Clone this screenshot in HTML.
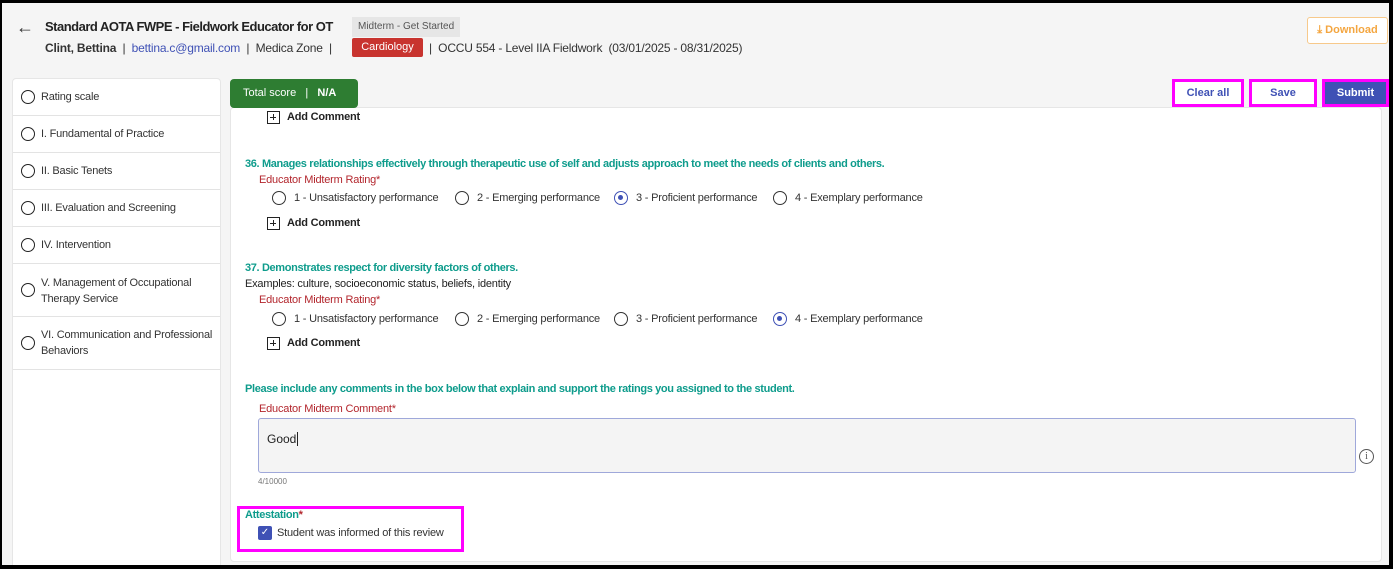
<!DOCTYPE html>
<html><head><meta charset="utf-8"><style>
*{box-sizing:border-box;margin:0;padding:0}
body{width:1393px;height:569px;overflow:hidden;background:#000;font-family:"Liberation Sans",sans-serif;position:relative}
.page{position:absolute;left:2px;top:3px;width:1387px;height:562px;background:#f5f5f5;overflow:hidden}
.a{position:absolute;white-space:nowrap}
.side{position:absolute;left:10px;top:75px;width:209px;height:500px;background:#fff;border:1px solid #e6e6e6;border-radius:4px}
.si{position:absolute;left:0;width:207px;border-bottom:1px solid #e3e3e3;font-size:11px;color:#333;letter-spacing:-0.2px}
.circ{position:absolute;width:14px;height:14px;border:1.6px solid #222;border-radius:50%}
.main{position:absolute;left:228px;top:104px;width:1152px;height:455px;background:#fff;border:1px solid #e6e6e6;border-radius:4px}
.q{color:#0e9c8c;font-size:11px;font-weight:bold;letter-spacing:-0.35px}
.lab{color:#b3262d;font-size:11px;letter-spacing:-0.2px}
.opt{font-size:11px;color:#333;letter-spacing:-0.2px}
.r{position:absolute;width:14px;height:14px;border:1.5px solid #333;border-radius:50%;background:#fff}
.r.on{border-color:#3f51b5}
.r.on:after{content:"";position:absolute;left:3px;top:3px;width:5px;height:5px;border-radius:50%;background:#3f51b5}
.ac{font-size:11px;font-weight:bold;color:#222;letter-spacing:-0.2px}
.pb{position:absolute;width:13px;height:13px;border:1.5px solid #222}
.pb:before{content:"";position:absolute;left:2px;top:4.5px;width:6px;height:1.5px;background:#222}
.pb:after{content:"";position:absolute;left:4.5px;top:2px;width:1.5px;height:6px;background:#222}
.btn{position:absolute;height:28px;border:3px solid #ff00ff;font-size:11px;font-weight:bold;color:#3f51b5;background:#fff;text-align:center;line-height:22px}
</style></head><body>
<div class="page">
 <div class="a" style="left:14px;top:14px;font-size:18px;color:#333">←</div>
 <div class="a" style="left:43px;top:16px;font-size:13px;font-weight:bold;color:#222;letter-spacing:-0.5px">Standard AOTA FWPE - Fieldwork Educator for OT</div>
 <div class="a" style="left:350px;top:14px;height:20px;background:#e6e6e6;padding:0 6px;font-size:10px;color:#555;line-height:20px">Midterm - Get Started</div>
 <div class="a" style="left:43px;top:38px;font-size:12px;color:#333;letter-spacing:-0.2px"><b>Clint, Bettina</b> &nbsp;| &nbsp;<span style="color:#3f51b5">bettina.c@gmail.com</span> &nbsp;| &nbsp;Medica Zone &nbsp;|</div>
 <div class="a" style="left:350px;top:35px;height:19px;width:71px;background:#c8342f;border-radius:2px;color:#fff;font-size:11px;text-align:center;line-height:19px">Cardiology</div>
 <div class="a" style="left:427px;top:38px;font-size:12px;color:#333;letter-spacing:-0.2px">| &nbsp;OCCU 554 - Level IIA Fieldwork &nbsp;(03/01/2025 - 08/31/2025)</div>
 <div class="a" style="left:1305px;top:14px;width:81px;height:27px;border:1px solid #f7c98b;border-radius:3px;background:#fff;color:#f4a640;font-size:11px;font-weight:bold;line-height:25px;text-align:center">⤓ Download</div>

 <div class="side">
  <div class="si" style="top:0;height:37px"><div class="circ" style="left:8px;top:11px"></div><span class="a" style="left:28px;top:12px">Rating scale</span></div>
  <div class="si" style="top:37px;height:37px"><div class="circ" style="left:8px;top:11px"></div><span class="a" style="left:28px;top:12px">I. Fundamental of Practice</span></div>
  <div class="si" style="top:74px;height:37px"><div class="circ" style="left:8px;top:11px"></div><span class="a" style="left:28px;top:12px">II. Basic Tenets</span></div>
  <div class="si" style="top:111px;height:37px"><div class="circ" style="left:8px;top:11px"></div><span class="a" style="left:28px;top:12px">III. Evaluation and Screening</span></div>
  <div class="si" style="top:148px;height:37px"><div class="circ" style="left:8px;top:11px"></div><span class="a" style="left:28px;top:12px">IV. Intervention</span></div>
  <div class="si" style="top:185px;height:53px"><div class="circ" style="left:8px;top:19px"></div><span class="a" style="left:28px;top:11px;line-height:16px">V. Management of Occupational<br>Therapy Service</span></div>
  <div class="si" style="top:238px;height:53px"><div class="circ" style="left:8px;top:19px"></div><span class="a" style="left:28px;top:10px;line-height:16px">VI. Communication and Professional<br>Behaviors</span></div>
 </div>

 <div class="main">
  <div class="pb" style="left:36px;top:3px"></div><div class="a ac" style="left:56px;top:3px">Add Comment</div>
  <div class="a q" style="left:14px;top:50px">36. Manages relationships effectively through therapeutic use of self and adjusts approach to meet the needs of clients and others.</div>
  <div class="a lab" style="left:28px;top:66px">Educator Midterm Rating*</div>
  <div class="r" style="left:41px;top:83px"></div><div class="a opt" style="left:63px;top:84px">1 - Unsatisfactory performance</div>
  <div class="r" style="left:224px;top:83px"></div><div class="a opt" style="left:246px;top:84px">2 - Emerging performance</div>
  <div class="r on" style="left:383px;top:83px"></div><div class="a opt" style="left:405px;top:84px">3 - Proficient performance</div>
  <div class="r" style="left:542px;top:83px"></div><div class="a opt" style="left:564px;top:84px">4 - Exemplary performance</div>
  <div class="pb" style="left:36px;top:109px"></div><div class="a ac" style="left:56px;top:109px">Add Comment</div>

  <div class="a q" style="left:14px;top:154px">37. Demonstrates respect for diversity factors of others.</div>
  <div class="a" style="left:14px;top:170px;font-size:11px;color:#222;letter-spacing:-0.2px">Examples: culture, socioeconomic status, beliefs, identity</div>
  <div class="a lab" style="left:28px;top:186px">Educator Midterm Rating*</div>
  <div class="r" style="left:41px;top:204px"></div><div class="a opt" style="left:63px;top:205px">1 - Unsatisfactory performance</div>
  <div class="r" style="left:224px;top:204px"></div><div class="a opt" style="left:246px;top:205px">2 - Emerging performance</div>
  <div class="r" style="left:383px;top:204px"></div><div class="a opt" style="left:405px;top:205px">3 - Proficient performance</div>
  <div class="r on" style="left:542px;top:204px"></div><div class="a opt" style="left:564px;top:205px">4 - Exemplary performance</div>
  <div class="pb" style="left:36px;top:229px"></div><div class="a ac" style="left:56px;top:229px">Add Comment</div>

  <div class="a q" style="left:14px;top:275px">Please include any comments in the box below that explain and support the ratings you assigned to the student.</div>
  <div class="a lab" style="left:28px;top:295px">Educator Midterm Comment*</div>
  <div class="a" style="left:27px;top:310px;width:1098px;height:55px;background:#f4f4f4;border:1px solid #9fa8da;border-radius:3px"><span class="a" style="left:8px;top:13px;font-size:12px;color:#222">Good<span style="border-left:1px solid #222;margin-left:1px"></span></span></div>
  <div class="a" style="left:1128px;top:341px;width:15px;height:15px;border:1.2px solid #555;border-radius:50%;font-size:10px;color:#555;text-align:center;line-height:13px;font-family:'Liberation Serif',serif">i</div>
  <div class="a" style="left:27px;top:369px;font-size:8px;color:#777">4/10000</div>

  <div class="a" style="left:6px;top:398px;width:227px;height:46px;border:3px solid #ff00ff"></div>
  <div class="a q" style="left:14px;top:401px">Attestation<span style="color:#b3262d">*</span></div>
  <div class="a" style="left:27px;top:418px;width:14px;height:14px;background:#3f51b5;border-radius:2px;color:#fff;font-size:10px;text-align:center;line-height:14px">✓</div>
  <div class="a opt" style="left:46px;top:419px">Student was informed of this review</div>
 </div>

 <div class="a" style="left:228px;top:76px;width:128px;height:29px;background:#2e7d32;border-radius:4px;color:#fff;font-size:11px;line-height:29px;padding-left:13px">Total score &nbsp; | &nbsp; <b>N/A</b></div>

 <div class="btn" style="left:1170px;top:76px;width:72px">Clear all</div>
 <div class="btn" style="left:1247px;top:76px;width:68px">Save</div>
 <div class="btn" style="left:1320px;top:76px;width:67px;background:#3f51b5;color:#fff">Submit</div>
</div>
</body></html>
